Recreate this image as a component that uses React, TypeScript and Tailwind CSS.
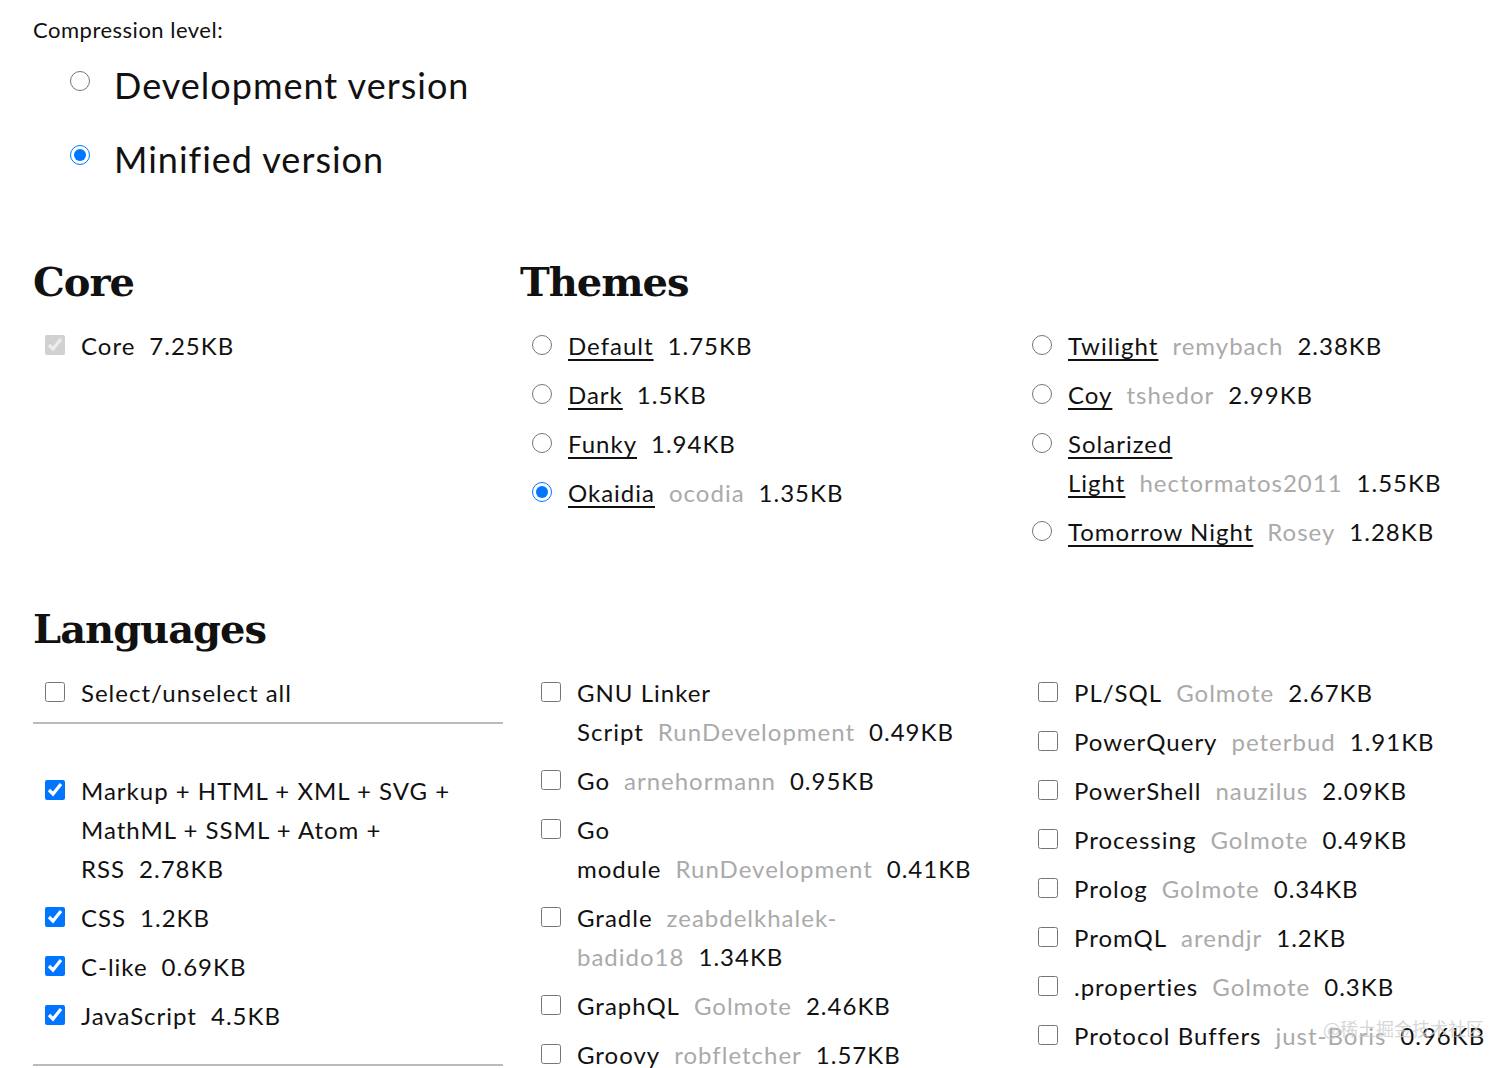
import React from "react";

const F = { fontFamily: "Lato, 'Noto Sans', sans-serif" };
const H = { fontFamily: "'DejaVu Serif', 'Liberation Serif', serif" };

type It = { n: string; a?: string; s: string; c?: boolean; link?: boolean };

function Row({ it, type, name, dis }: { it: It; type: string; name?: string; dis?: boolean }) {
  return (
    <label className="flex items-start gap-[16px] mb-[10px]">
      <input type={type} name={name} defaultChecked={it.c} disabled={dis} className="mt-[9px] w-[20px] h-[20px] shrink-0" />
      <span className="leading-[39px] tracking-[1px]">
        <span className={it.link ? "underline underline-offset-4" : ""}>{it.n}</span>
        {it.a && <span className="text-[#aaaaaa] ml-[14px]">{it.a}</span>}
        <span className="ml-[14px]">{it.s}</span>
      </span>
    </label>
  );
}

const themes1: It[] = [
  { n: "Default", s: "1.75KB", link: true },
  { n: "Dark", s: "1.5KB", link: true },
  { n: "Funky", s: "1.94KB", link: true },
  { n: "Okaidia", a: "ocodia", s: "1.35KB", link: true, c: true },
];
const themes2: It[] = [
  { n: "Twilight", a: "remybach", s: "2.38KB", link: true },
  { n: "Coy", a: "tshedor", s: "2.99KB", link: true },
  { n: "Solarized Light", a: "hectormatos2011", s: "1.55KB", link: true },
  { n: "Tomorrow Night", a: "Rosey", s: "1.28KB", link: true },
];
const l1: It[] = [
  { n: "Markup + HTML + XML + SVG + MathML + SSML + Atom + RSS", s: "2.78KB", c: true },
  { n: "CSS", s: "1.2KB", c: true },
  { n: "C-like", s: "0.69KB", c: true },
  { n: "JavaScript", s: "4.5KB", c: true },
];
const l2: It[] = [
  { n: "GNU Linker Script", a: "RunDevelopment", s: "0.49KB" },
  { n: "Go", a: "arnehormann", s: "0.95KB" },
  { n: "Go module", a: "RunDevelopment", s: "0.41KB" },
  { n: "Gradle", a: "zeabdelkhalek-badido18", s: "1.34KB" },
  { n: "GraphQL", a: "Golmote", s: "2.46KB" },
  { n: "Groovy", a: "robfletcher", s: "1.57KB" },
];
const l3: It[] = [
  { n: "PL/SQL", a: "Golmote", s: "2.67KB" },
  { n: "PowerQuery", a: "peterbud", s: "1.91KB" },
  { n: "PowerShell", a: "nauzilus", s: "2.09KB" },
  { n: "Processing", a: "Golmote", s: "0.49KB" },
  { n: "Prolog", a: "Golmote", s: "0.34KB" },
  { n: "PromQL", a: "arendjr", s: "1.2KB" },
  { n: ".properties", a: "Golmote", s: "0.3KB" },
  { n: "Protocol Buffers", a: "just-Boris", s: "0.96KB" },
];

export default function App() {
  return (
    <div style={F} className="relative h-[1068px] overflow-hidden bg-white text-[#111] text-[24px] pl-[33px] pt-[14px]">
      <div className="text-[22px] leading-[32px] tracking-[0.5px]">Compression level:</div>
      <div className="pl-[37px] text-[36px] mt-[2px] tracking-[1px]">
        <label className="flex items-center gap-[24px] h-[74px]">
          <input type="radio" name="cmp" className="w-[20px] h-[20px] -mt-[8px]" /> Development version
        </label>
        <label className="flex items-center gap-[24px] h-[74px]">
          <input type="radio" name="cmp" defaultChecked className="w-[20px] h-[20px] -mt-[8px]" /> Minified version
        </label>
      </div>
      <div className="flex mt-[56px]">
        <div className="w-[487px]">
          <h2 style={H} className="text-[40px] font-bold leading-[60px] tracking-tight">Core</h2>
          <div className="pl-[12px] mt-[14px]">
            <Row it={{ n: "Core", s: "7.25KB", c: true }} type="checkbox" dis />
          </div>
        </div>
        <div className="flex-1">
          <h2 style={H} className="text-[40px] font-bold leading-[60px] tracking-tight">Themes</h2>
          <div className="flex mt-[14px]">
            <div className="w-[500px] pl-[12px]">{themes1.map((t) => <Row key={t.n} it={t} type="radio" name="th" />)}</div>
            <div className="w-[445px] pl-[12px]">{themes2.map((t) => <Row key={t.n} it={t} type="radio" name="th" />)}</div>
          </div>
        </div>
      </div>
      <h2 style={H} className="text-[40px] font-bold leading-[60px] tracking-tight mt-[38px]">Languages</h2>
      <div className="grid grid-cols-[470px_470px_470px] gap-x-[27px] mt-[14px]">
        <div>
          <div className="pl-[12px]"><Row it={{ n: "Select/unselect all", s: "" }} type="checkbox" /></div>
          <hr className="border-t-2 border-[#bbb] mt-[3px] mb-[47px]" />
          <div className="pl-[12px]">{l1.map((t) => <Row key={t.n} it={t} type="checkbox" />)}</div>
          <hr className="border-t-2 border-[#bbb] mt-[29px]" />
        </div>
        <div className="pl-[11px]">{l2.map((t) => <Row key={t.n} it={t} type="checkbox" />)}</div>
        <div className="pl-[11px]">{l3.map((t) => <Row key={t.n} it={t} type="checkbox" />)}</div>
      </div>
      <div className="absolute right-[28px] bottom-[26px] text-[18px] text-[#cccccc]/80" style={{ fontFamily: "'Noto Sans CJK SC', sans-serif" }}>@稀土掘金技术社区</div>
    </div>
  );
}
